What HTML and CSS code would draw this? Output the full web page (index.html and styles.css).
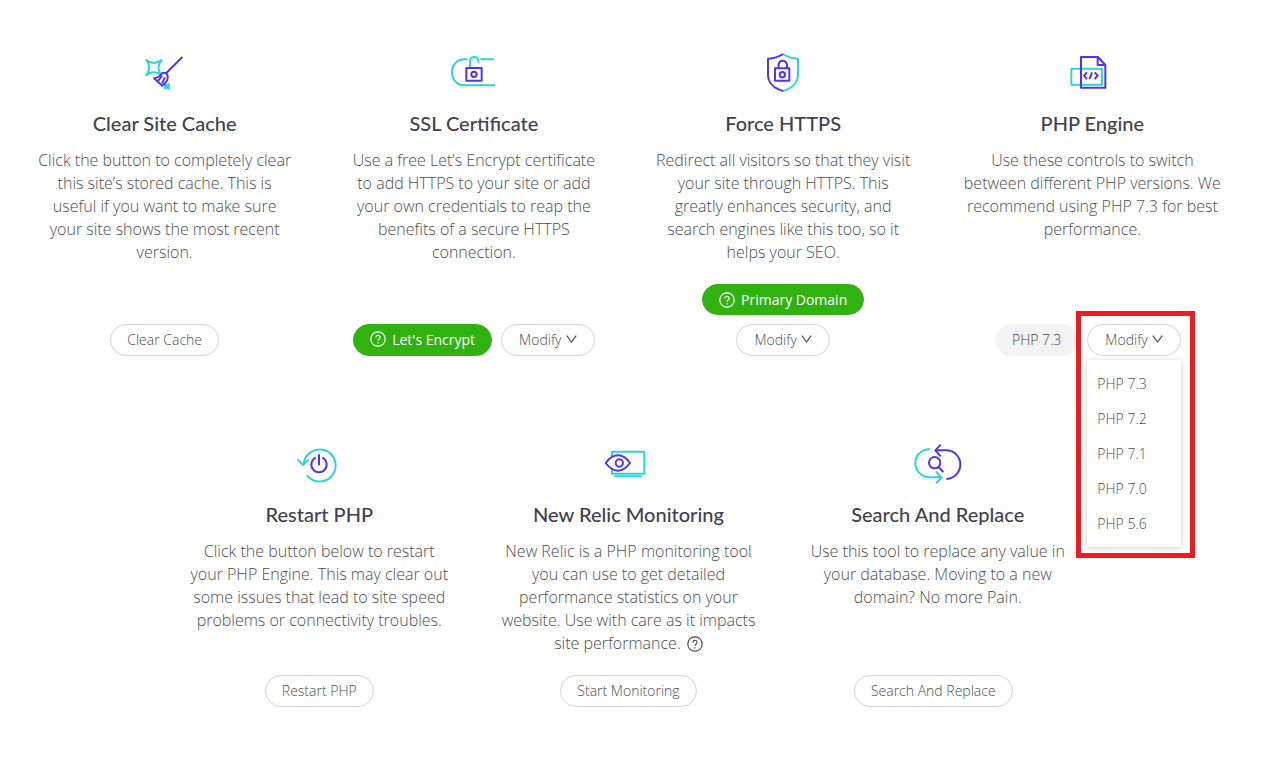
FILE: index.html
```html
<!DOCTYPE html>
<html lang="en">
  <head>
    <meta charset="UTF-8">
    <meta name="viewport" content="width=device-width, initial-scale=1.0">
    <title>Site Tools</title>
    <link rel="stylesheet" href="styles.css">
  </head>
  <body>
    <!-- shared small icons -->
    <svg class="defs" aria-hidden="true">
        <symbol id="help" viewBox="0 0 16 16">
            <circle cx="8" cy="8" r="7.2" />
            <path d="M5.9 6.4a2.1 2 0 1 1 3.1 1.8c-.7.4-1 .8-1 1.6M8 11.2v1.2" />
        </symbol>
        <symbol id="chevron" viewBox="0 0 11 8">
            <path d="M.8.6 5.5 7 10.2.6" />
        </symbol>
    </svg>

    <main class="tools">

        <section class="tool">
            <svg class="icon" viewBox="0 0 210 150" aria-hidden="true">
                <path class="teal" d="M49 45Q71 63 95 45Q76 67 95 90Q71 73 49 91Q66 67 49 45Z" />
                <path class="teal blob" d="M102 115Q111 122 119 115Q115 124 119 132Q111 127 102 132Q107 124 102 115Z" />
                <path class="purple" d="M157 36 109 84M97 84Q110 80 113 94Q115 108 97 122L72 100Q86 98 97 84ZM96 92 85 107M105 97 96 115" />
            </svg>
            <h2>Clear Site Cache</h2>
            <p>Click the button to completely clear this site’s stored cache. This is useful if you want to make sure your site shows the most recent version.</p>
            <div class="actions">
                <button class="btn" type="button">Clear Cache</button>
            </div>
        </section>

        <section class="tool">
            <svg class="icon" viewBox="-3 0 210 150" aria-hidden="true">
                <path class="teal" d="M83 43H74C50 43 36 61 36 82S50 121 74 121H165M121 43H162M90 68V47Q91 36 102 36T115 47V53" />
                <rect class="purple" x="79" y="69" width="46" height="38" />
                <circle class="purple" cx="102" cy="88" r="8" />
            </svg>
            <h2>SSL Certificate</h2>
            <p>Use a free Let’s Encrypt certificate to add HTTPS to your site or add your own credentials to reap the benefits of a secure HTTPS connection.</p>
            <div class="actions">
                <button class="btn green" type="button"><svg class="help"><use href="#help" /></svg>Let's Encrypt</button>
                <button class="btn modify" type="button">Modify<svg class="chevron"><use href="#chevron" /></svg></button>
            </div>
        </section>

        <section class="tool">
            <svg class="icon" viewBox="-6 0 210 150" aria-hidden="true">
                <path class="teal" d="M99 27Q118 40 144 41V89C144 112 126 130 99 138" />
                <path class="purple" d="M99 27Q80 40 54 41V89C54 112 72 130 99 138" />
                <path class="purple" d="M86 70V59Q87 47 98 47T111 59V70" />
                <rect class="purple" x="75" y="70" width="43" height="37" />
                <circle class="purple" cx="97" cy="89" r="8" />
            </svg>
            <h2>Force HTTPS</h2>
            <p>Redirect all visitors so that they visit your site through HTTPS. This greatly enhances security, and search engines like this too, so it helps your SEO.</p>
            <div class="actions stacked">
                <button class="btn green short" type="button"><svg class="help"><use href="#help" /></svg>Primary Domain</button>
                <button class="btn modify" type="button">Modify<svg class="chevron"><use href="#chevron" /></svg></button>
            </div>
        </section>

        <section class="tool">
            <svg class="icon" viewBox="6 0 210 150" aria-hidden="true">
                <rect class="teal" x="49" y="71" width="92" height="48" />
                <path class="purple" d="M78 36H129L151 60V128H78ZM128 37V60H150" />
                <path class="purple" d="M96 82 87 92 96 102M119 82 128 92 119 102M111 82 104 102" />
            </svg>
            <h2>PHP Engine</h2>
            <p>Use these controls to switch between different PHP versions. We recommend using PHP 7.3 for best performance.</p>
            <div class="actions offset">
                <span class="btn current">PHP 7.3</span>
                <div class="dropdown">
                    <button class="btn modify" type="button" aria-expanded="true" aria-controls="versions">Modify<svg class="chevron"><use href="#chevron" /></svg></button>
                    <ul class="menu" id="versions">
                        <li><button type="button">PHP 7.3</button></li>
                        <li><button type="button">PHP 7.2</button></li>
                        <li><button type="button">PHP 7.1</button></li>
                        <li><button type="button">PHP 7.0</button></li>
                        <li><button type="button">PHP 5.6</button></li>
                    </ul>
                    <span class="highlight"></span>
                </div>
            </div>
        </section>

        <section class="tool">
            <svg class="icon" viewBox="-3 3 210 150" aria-hidden="true">
                <path class="teal" d="M66 121A48 48 0 1 0 56 88M38 73 54 90 71 73" />
                <path class="purple" d="M92 68A23 23 0 1 0 112 68M102 58V91" />
            </svg>
            <h2>Restart PHP</h2>
            <p>Click the button below to restart your PHP Engine. This may clear out some issues that lead to site speed problems or connectivity troubles.</p>
            <div class="actions">
                <button class="btn" type="button">Restart PHP</button>
            </div>
        </section>

        <section class="tool">
            <svg class="icon" viewBox="-3 3 210 150" aria-hidden="true">
                <path class="teal" d="M51 64V50H148V116H51V100M58 124H140" />
                <path class="purple" d="M32 84Q49 61 69 61T105 84Q88 107 69 107T32 84Z" />
                <circle class="purple" cx="73" cy="84" r="11" />
            </svg>
            <h2>New Relic Monitoring</h2>
            <p>New Relic is a PHP monitoring tool you can use to get detailed performance statistics on your website. Use with care as it impacts site performance. <svg class="help inline"><use href="#help" /></svg></p>
            <div class="actions">
                <button class="btn" type="button">Start Monitoring</button>
            </div>
        </section>

        <section class="tool">
            <svg class="icon" viewBox="-6 3 210 150" aria-hidden="true">
                <path class="teal" d="M75 42C47 44 31 62 31 84S47 127 75 127H107M93 110 110 128 93 145" />
                <path class="purple" d="M124 132C151 130 166 110 166 88S149 46 123 46H93M107 29 91 46 107 64" />
                <circle class="purple" cx="89" cy="83" r="17" />
                <path class="purple" d="M101 96 115 111" />
            </svg>
            <h2>Search And Replace</h2>
            <p>Use this tool to replace any value in your database. Moving to a new domain? No more Pain.</p>
            <div class="actions offset">
                <button class="btn" type="button">Search And Replace</button>
            </div>
        </section>

    </main>
  </body>
</html>
```
FILE: styles.css
```css
:root {
    --teal: #2cd5d9;
    --purple: #5333ed;
    --green: #30b211;
    --text: #4d4d50;
}
* {
    box-sizing: border-box;
}
body {
    margin: 0;
    padding: 45px 24px 60px 10px;
    background: #fff;
    color: var(--text);
    font-family: "Open Sans", sans-serif;
    font-size: 16px;
    line-height: 23px;
}
button {
    font-family: inherit;
    font-size: inherit;
    cursor: pointer;
}
.defs {
    position: absolute;
    width: 0;
    height: 0;
}
.tools {
    display: flex;
    flex-wrap: wrap;
    justify-content: center;
    row-gap: 80px;
}
.tool {
    display: flex;
    flex-direction: column;
    align-items: center;
    width: 25%;
    padding: 0 25px;
    text-align: center;
}
.tool h2 {
    margin: 16px 0 14px;
    color: #43414e;
    font-family: Lato, sans-serif;
    font-size: 20px;
    font-weight: 500;
    line-height: 24px;
}
.tool p {
    margin: 0 0 20px;
    font-weight: 300;
}

/* icons */
.icon {
    width: 70px;
    height: 50px;
    fill: none;
    stroke-width: 6;
    stroke-linejoin: round;
}
.teal {
    stroke: var(--teal);
}
.teal.blob {
    fill: var(--teal);
    stroke-width: 3;
}
.purple {
    stroke: var(--purple);
}
.help {
    width: 16px;
    height: 16px;
    fill: none;
    stroke: currentColor;
    stroke-width: 1.2;
}
.help.inline {
    margin-left: 2px;
    vertical-align: -3px;
}
.chevron {
    width: 11px;
    height: 8px;
    fill: none;
    stroke: currentColor;
    stroke-width: 1.2;
}

/* buttons */
.actions {
    display: flex;
    justify-content: center;
    gap: 9px;
    margin-top: auto;
}
.actions.stacked {
    flex-direction: column;
    align-items: center;
}
.actions.offset {
    margin-right: 9px;
}
.btn {
    display: flex;
    align-items: center;
    gap: 4px;
    height: 32px;
    padding: 0 16px 2px;
    border: 1px solid #d5d5d8;
    border-radius: 16px;
    background: #fff;
    color: var(--text);
    font-size: 14px;
    font-weight: 300;
    white-space: nowrap;
}
.btn.modify {
    padding: 0 17px 2px;
}
.btn.green {
    gap: 6px;
    border-color: var(--green);
    background: var(--green);
    color: #fff;
    font-weight: 400;
}
.btn.short {
    height: 31px;
    padding-bottom: 0;
}
.btn.current {
    border-color: #f3f3f5;
    background: #f3f3f5;
    color: #43414e;
}

/* open version menu */
.dropdown {
    position: relative;
}
.menu {
    position: absolute;
    top: 36px;
    left: 0;
    width: 94px;
    margin: 0;
    padding: 6px 0;
    background: #fff;
    box-shadow: 0 1px 6px rgba(0, 0, 0, 0.2);
    list-style: none;
}
.menu button {
    width: 100%;
    height: 35px;
    padding: 0 10px;
    border: 0;
    background: none;
    color: var(--text);
    font-size: 14px;
    font-weight: 300;
    text-align: left;
}
.menu li {
    display: flex;
}
.highlight {
    position: absolute;
    top: -13px;
    left: -11px;
    width: 119px;
    height: 247px;
    border: 5px solid #ed1c24;
    pointer-events: none;
}
```
